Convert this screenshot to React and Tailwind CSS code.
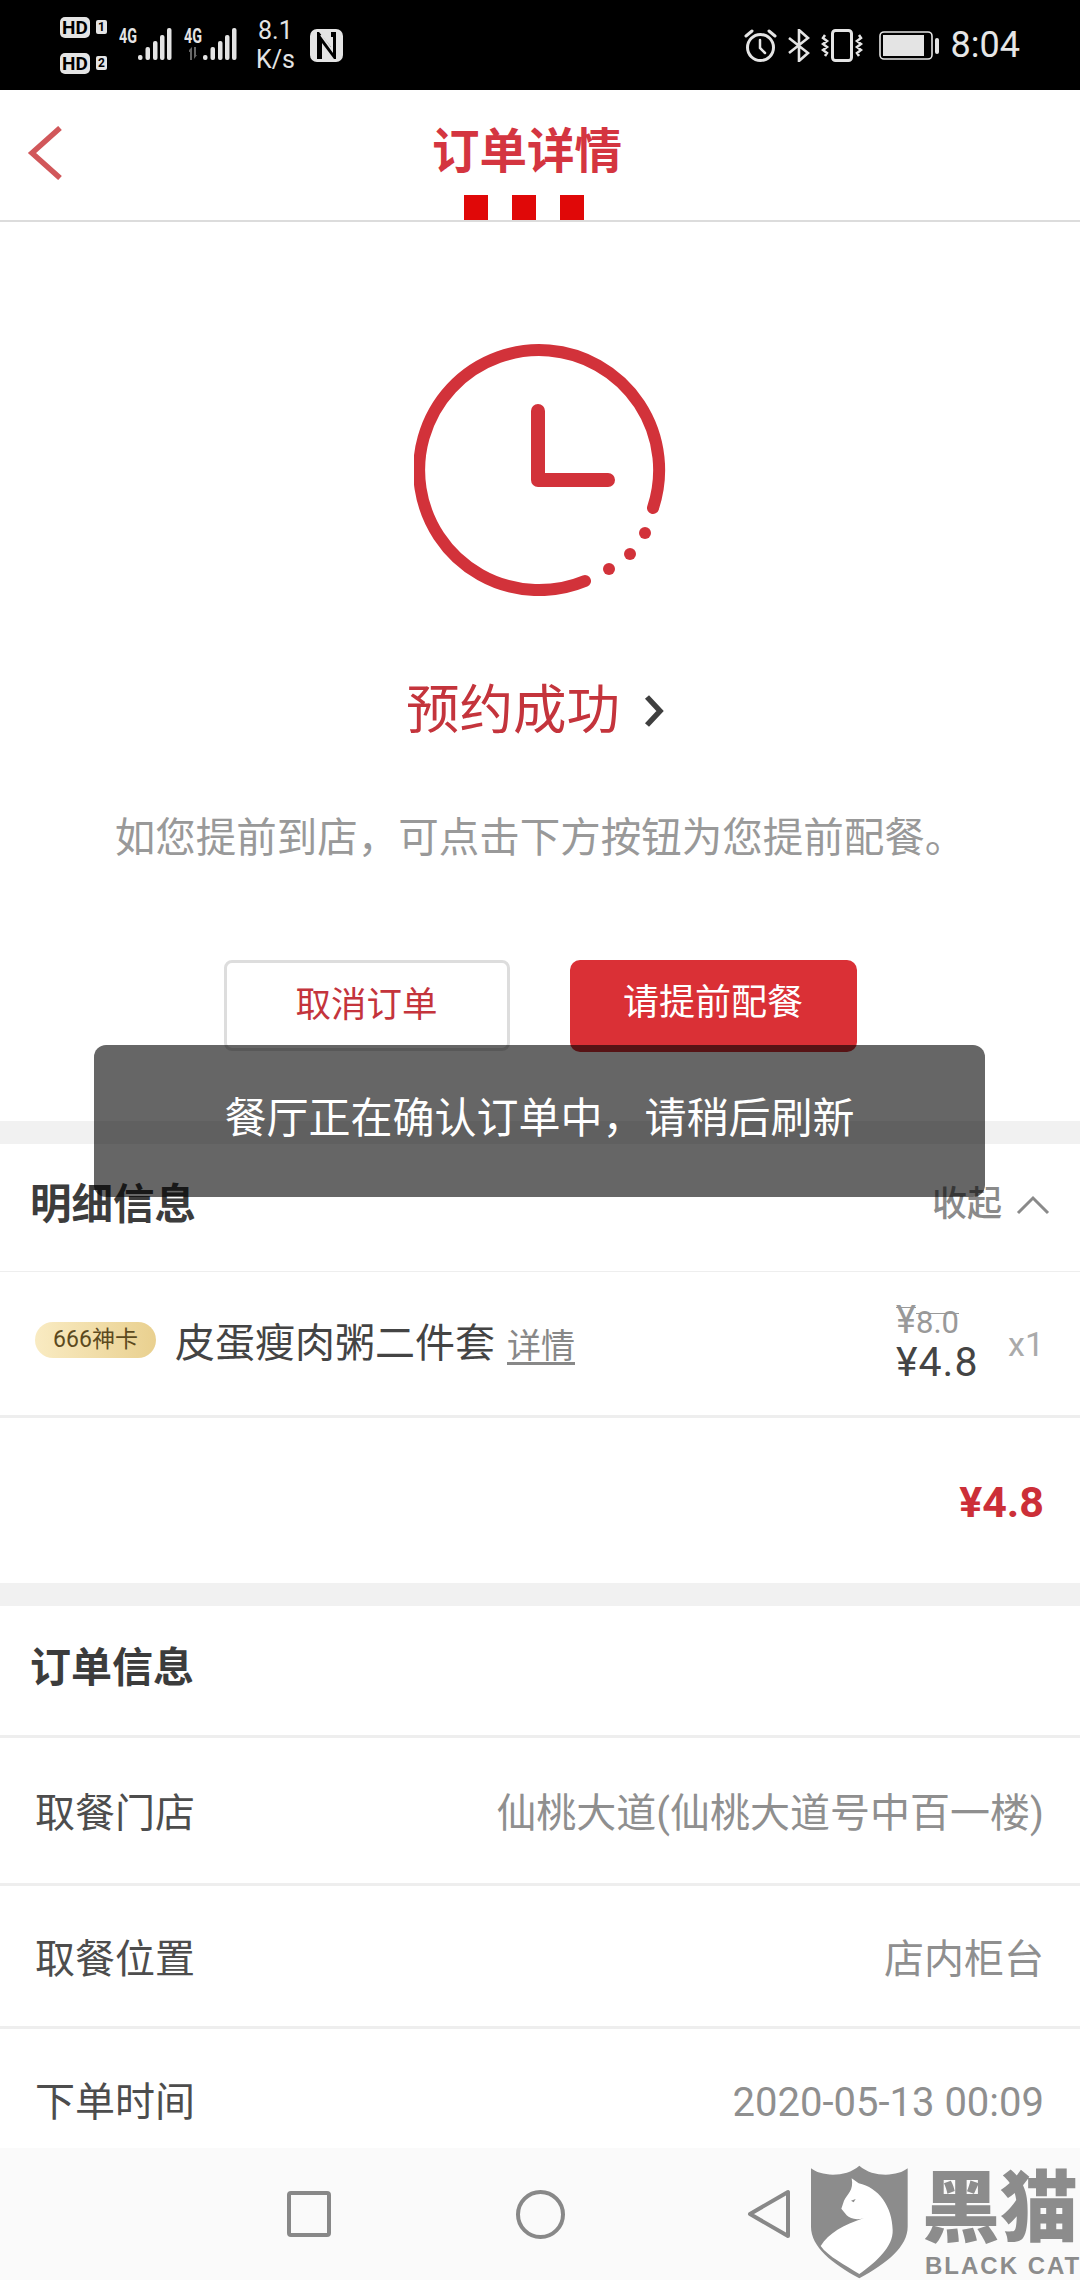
const cjk = { fontFamily: 'Roboto, "Noto Sans CJK SC", sans-serif' };

function HdBadge({ n }) {
  return (
    <div className="flex items-center gap-[6px]">
      <div className="w-[30px] h-[21px] rounded-[5px] bg-[#e4e4e4] text-black text-[19px] font-bold leading-none flex items-center justify-center">HD</div>
      <div className="w-[11px] h-[14px] rounded-[2px] bg-[#e4e4e4] text-black text-[12px] font-bold leading-none flex items-center justify-center">{n}</div>
    </div>
  );
}

function Signal({ arrows }) {
  return (
    <svg width="53" height="39" viewBox="0 -6 53 39" fill="#e4e4e4">
      <text x="0" y="15" fontSize="20" fontWeight="700" fontFamily="Roboto, sans-serif" textLength="18" lengthAdjust="spacingAndGlyphs">4G</text>
      {arrows && <path d="M5 22l3-3v13H6v-8H5zM10 19h2v8l1 0-3 4z" fill="#666" />}
      <rect x="19" y="27" width="4.5" height="5" rx="2" />
      <rect x="26.5" y="19" width="4.5" height="13" rx="2" />
      <rect x="34" y="13" width="4.5" height="19" rx="2" />
      <rect x="41" y="7" width="4.5" height="25" rx="2" />
      <rect x="48" y="0" width="4.5" height="32" rx="2" />
    </svg>
  );
}

function NfcIcon() {
  return (
    <svg width="33" height="33" viewBox="0 0 33 33">
      <rect width="33" height="33" rx="7" fill="#e4e4e4" />
      <path d="M7 3v27h5V14l12 16h2V3h-5v15L9 3z" fill="#000" />
      <path d="M11 6l11 15V8" fill="none" stroke="#e4e4e4" strokeWidth="2" />
    </svg>
  );
}

function AlarmIcon() {
  return (
    <svg width="33" height="33" viewBox="0 0 33 33" fill="none" stroke="#e4e4e4" strokeLinecap="round">
      <circle cx="16.5" cy="18.5" r="13" strokeWidth="3" />
      <path d="M16 11v8l5 5" strokeWidth="2.5" />
      <path d="M2 7l6-5M31 7l-6-5" strokeWidth="3" />
    </svg>
  );
}

function BluetoothIcon() {
  return (
    <svg width="22" height="33" viewBox="0 0 22 33" fill="none" stroke="#e4e4e4" strokeWidth="2.6">
      <path d="M1 9l19 15-9 8V1l9 8L1 24" />
    </svg>
  );
}

function VibrateIcon() {
  return (
    <svg width="42" height="33" viewBox="0 0 42 33" fill="none" stroke="#e4e4e4">
      <rect x="11.5" y="1.5" width="19" height="30" rx="3" strokeWidth="3" />
      <path d="M4 6l-2 3 4 3-4 3 4 3-4 3 4 3-2 3M38 6l2 3-4 3 4 3-4 3 4 3-4 3 2 3" strokeWidth="2.5" />
    </svg>
  );
}

function BatteryIcon() {
  return (
    <svg width="60" height="29" viewBox="0 0 60 29">
      <rect x="1" y="1" width="52" height="27" rx="4" fill="none" stroke="#e4e4e4" strokeWidth="1.6" />
      <rect x="4" y="4" width="41" height="21" fill="#e4e4e4" />
      <rect x="56" y="7" width="4" height="16" rx="2" fill="#e4e4e4" />
    </svg>
  );
}

function StatusBar() {
  return (
    <div className="h-[90px] shrink-0 bg-black flex items-center justify-between pl-[60px] pr-[60px]" style={{ fontFamily: 'Roboto, sans-serif' }}>
      <div className="flex items-center">
        <div className="flex flex-col gap-[15px]">
          <HdBadge n="1" />
          <HdBadge n="2" />
        </div>
        <div className="ml-[12px] mt-[-7px]"><Signal /></div>
        <div className="ml-[12px] mt-[-7px]"><Signal arrows /></div>
        <div className="ml-[19px] flex flex-col items-start text-[#e4e4e4] text-[25px] leading-[29px]">
          <span className="ml-[2px]">8.1</span>
          <span>K/s</span>
        </div>
        <div className="ml-[15px]"><NfcIcon /></div>
      </div>
      <div className="flex items-center">
        <AlarmIcon />
        <div className="ml-[11px]"><BluetoothIcon /></div>
        <div className="ml-[11px]"><VibrateIcon /></div>
        <div className="ml-[16px]"><BatteryIcon /></div>
        <span className="ml-[12px] text-[#e6e6e6] text-[36px] leading-none">8:04</span>
      </div>
    </div>
  );
}

function Header() {
  return (
    <div className="relative h-[132px] shrink-0 bg-white border-b-2 border-[#dcdcdc] flex justify-center pr-[26px]">
      <svg className="absolute left-[26px] top-[36px]" width="38" height="54" viewBox="0 0 38 54" fill="none" stroke="#d1575a" strokeWidth="5.5">
        <path d="M34 2L6 27l28 25" />
      </svg>
      <div className="mt-[36px] text-[47.5px] leading-[52px] font-bold text-[#d43540]">订单详情</div>
      <div className="absolute left-[464px] top-[105px] flex gap-[24px]">
        <div className="w-[24px] h-[25px] bg-[#e00808]" />
        <div className="w-[24px] h-[25px] bg-[#e00808]" />
        <div className="w-[24px] h-[25px] bg-[#e00808]" />
      </div>
    </div>
  );
}

function ClockIcon() {
  return (
    <svg width="252" height="252" viewBox="0 0 252 252" fill="none" stroke="#d2323a" strokeLinecap="round" strokeLinejoin="round">
      <path d="M239 164A120 120 0 1 0 171 237" strokeWidth="12" />
      <path d="M124 67v69h70" strokeWidth="14" />
      <g fill="#d2323a" stroke="none">
        <circle cx="231" cy="189" r="6" />
        <circle cx="216" cy="210" r="6" />
        <circle cx="195" cy="225" r="6" />
      </g>
    </svg>
  );
}

function ChevronRight() {
  return (
    <svg width="20" height="32" viewBox="0 0 20 32" fill="none" stroke="#3f3f3f" strokeWidth="5.5">
      <path d="M3 2l13 14L3 30" />
    </svg>
  );
}

function InfoRow({ label, value, className }) {
  return (
    <div className={`flex items-center justify-between pl-[35px] pr-[36px] ${className}`}>
      <span className="text-[40px] leading-none text-[#4d4d4d]">{label}</span>
      <span className="text-[40px] leading-none text-[#8f8f8f]">{value}</span>
    </div>
  );
}

function NavBar() {
  return (
    <div className="h-[132px] shrink-0 bg-[#fafafa] flex items-center pl-[287px]">
      <div className="w-[44px] h-[46px] rounded-[4px] border-[4px] border-[#888888]" />
      <div className="ml-[185px] w-[49px] h-[49px] rounded-full border-[4px] border-[#888888]" />
      <svg className="ml-[182px]" width="44" height="50" viewBox="0 0 44 50" fill="none" stroke="#888888" strokeWidth="4" strokeLinejoin="round">
        <path d="M41 3v44L3 25z" />
      </svg>
    </div>
  );
}

function Watermark() {
  return (
    <div className="absolute right-0 bottom-0 w-[280px] h-[130px]">
      <svg className="absolute left-0 top-0" width="280" height="130" viewBox="0 0 840 390">
        <path d="M33 55C60 78 135 85 178 47C221 85 296 78 323 55V230C323 290 260 340 178 385C96 340 33 290 33 230Z" fill="#8c8c8c" />
        <path d="M155 85L176 100C235 112 277 170 278 240C280 290 230 335 178 372C135 345 85 320 62 288C85 250 130 225 192 204C170 212 150 206 140 196L124 176L132 152C142 132 162 122 155 85Z" fill="#fff" />
        <path d="M153 152l14-5-6 10z" fill="#8c8c8c" />
      </svg>
      <div className="absolute left-[122px] top-[15px] text-[78px] leading-[90px] font-black text-[#8c8c8c] whitespace-nowrap">黑猫</div>
      <div className="absolute left-[125px] top-[104px] text-[24px] leading-[24px] font-bold tracking-[2px] text-[#8c8c8c] whitespace-nowrap" style={{ fontFamily: '"Liberation Sans", sans-serif' }}>BLACK CAT</div>
    </div>
  );
}

export default function App() {
  return (
    <div className="relative w-[1080px] h-[2280px] overflow-hidden bg-white flex flex-col" style={cjk}>
      <StatusBar />
      <Header />

      <div className="flex-1 min-h-0 flex flex-col">
        {/* order status */}
        <div className="h-[899px] shrink-0 flex flex-col items-center pt-[122px]">
          <ClockIcon />
          <div className="mt-[88px] flex items-center gap-[24px] pr-[10px]">
            <span className="text-[53.5px] leading-[54px] text-[#c4343c]">预约成功</span>
            <ChevronRight />
          </div>
          <p className="mt-[76px] text-[40.5px] leading-[48px] text-[#999999]">如您提前到店，可点击下方按钮为您提前配餐。</p>
          <div className="mt-[98px] flex gap-[60px]">
            <div className="w-[286px] h-[91px] rounded-[8px] border-[3px] border-[#dddddd] flex items-center justify-center text-[35.5px] leading-none text-[#c4343c]">取消订单</div>
            <div className="w-[287px] h-[92px] rounded-[10px] bg-[#da3036] pb-[6px] flex items-center justify-center text-[36px] leading-none text-white">请提前配餐</div>
          </div>
        </div>

        <div className="h-[23px] shrink-0 bg-[#f1f1f1]" />

        {/* details */}
        <div className="h-[128px] shrink-0 border-b border-[#eeeeee] flex items-center justify-between pl-[30px] pr-[30px] pb-[6px]">
          <span className="text-[41.5px] leading-none font-bold text-[#3c3c3c]">明细信息</span>
          <div className="flex items-center gap-[14px]">
            <span className="text-[35px] leading-none font-medium text-[#8a8a8a]">收起</span>
            <svg width="34" height="20" viewBox="0 0 34 20" fill="none" stroke="#8a8a8a" strokeWidth="3">
              <path d="M2 18L17 3l15 15" />
            </svg>
          </div>
        </div>

        <div className="h-[146px] shrink-0 border-b-[3px] border-[#eeeeee] flex items-center pl-[35px] pr-[36px]">
          <div className="w-[121px] h-[36px] rounded-[18px] bg-gradient-to-r from-[#f9ebc2] to-[#e9d08f] flex items-center justify-center text-[23px] leading-none text-[#5c4a1e] mb-[8px]">666神卡</div>
          <span className="ml-[19px] text-[40px] leading-none text-[#444444]">皮蛋瘦肉粥二件套</span>
          <span className="ml-[12px] mt-[4px] text-[34px] leading-none text-[#888888] underline underline-offset-4">详情</span>
          <div className="ml-auto flex items-center">
            <div className="w-[83px] flex flex-col gap-[3px] mb-[4px]">
              <span className="w-fit leading-none text-[#999999] line-through">
                <span className="text-[38px]">¥</span>
                <span className="text-[31px]">8.0</span>
              </span>
              <span className="text-[41px] leading-none tracking-[1px] text-[#444444] whitespace-nowrap">¥4.8</span>
            </div>
            <span className="ml-[29px] text-[34px] leading-none text-[#aaaaaa]">x1</span>
          </div>
        </div>

        <div className="h-[165px] shrink-0 flex items-center justify-end pr-[36px] pt-[4px]">
          <span className="text-[43px] leading-none font-bold text-[#cc2f38]">¥4.8</span>
        </div>

        <div className="h-[23px] shrink-0 bg-[#f1f1f1]" />

        {/* order info */}
        <div className="h-[132px] shrink-0 border-b-[3px] border-[#eeeeee] flex items-center pl-[30px] pb-[4px]">
          <span className="text-[41px] leading-none font-bold text-[#3c3c3c]">订单信息</span>
        </div>
        <div className="grid grid-rows-[148px_143px_1fr] flex-1 min-h-0">
          <InfoRow label="取餐门店" value="仙桃大道(仙桃大道号中百一楼)" className="border-b-[3px] border-[#eeeeee] pt-[6px]" />
          <InfoRow label="取餐位置" value="店内柜台" className="border-b-[3px] border-[#eeeeee] pt-[8px]" />
          <InfoRow label="下单时间" value="2020-05-13 00:09" className="pt-[28px]" />
        </div>
      </div>

      <NavBar />

      {/* toast */}
      <div className="absolute left-[94px] top-[1045px] w-[891px] h-[152px] rounded-[12px] bg-black/60 flex items-center justify-center pb-[4px]">
        <span className="text-[42px] leading-none text-white">餐厅正在确认订单中，请稍后刷新</span>
      </div>

      <Watermark />
    </div>
  );
}
